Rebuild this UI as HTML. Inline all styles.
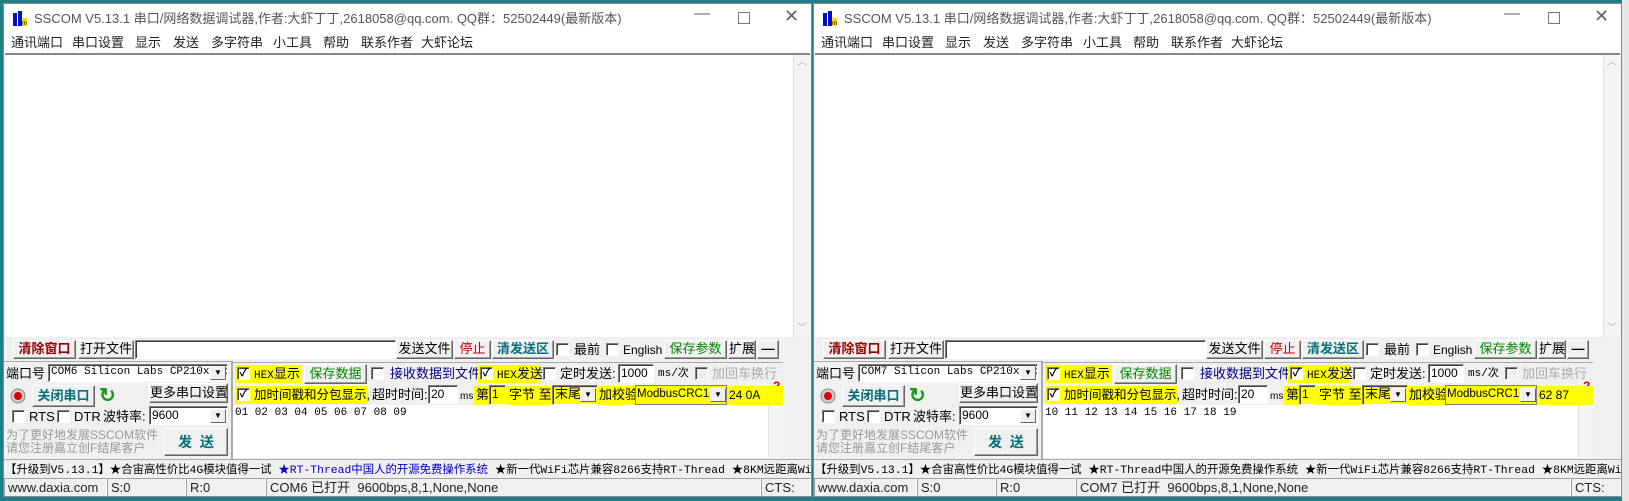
<!DOCTYPE html>
<html><head><meta charset="utf-8"><style>
*{box-sizing:border-box;margin:0;padding:0}
body{width:1629px;height:501px;overflow:hidden;background:#1f7d86;position:relative;font-family:"Liberation Sans","Noto Sans CJK SC",sans-serif;font-size:13px;color:#000}
.win{position:absolute;top:3px;width:809px;height:494px;background:#f0f0f0;border:1px solid #888;overflow:hidden}
.a{position:absolute;white-space:nowrap;line-height:16px}
.title{left:0;top:0;width:100%;height:29px;background:#fff}
.ttl{left:30px;top:7px;font-size:13px;color:#555}
.menu{left:0;top:29px;width:100%;height:20px;background:#fff}
.menu span{position:absolute;top:2px;font-size:13px;color:#222;line-height:16px}
.rx{left:1px;top:49px;width:805px;height:284px;background:#fff;border-top:2px solid #888}
.sb{background:#f4f4f4;border-left:1px solid #e0e0e0}
.btn{background:#f0f0f0;border:1px solid;border-color:#fff #666 #666 #fff;box-shadow:inset -1px -1px #a0a0a0;text-align:center;line-height:16px;font-size:13px}
.inp{background:#fff;border:1px solid;border-color:#808080 #fff #fff #808080;box-shadow:inset 1px 1px #404040;font-size:12px;line-height:16px;padding-left:2px;overflow:hidden}
.cb{width:13px;height:13px;background:#fff;border:1px solid;border-color:#808080 #fff #fff #808080;box-shadow:inset 1px 1px #404040;font-size:11px;line-height:11px;text-align:center;font-weight:bold}
.y{background:#ffff00}
.mono{font-family:"Liberation Mono","Noto Sans CJK SC",monospace;font-size:12px}
.dd{width:16px;height:14px;background:#f0f0f0;border:1px solid;border-color:#fff #666 #666 #fff;font-size:8px;line-height:12px;text-align:center}
.st{top:474px;height:20px;border:1px solid;border-color:#a0a0a0 #fff #fff #a0a0a0;padding-left:3px;line-height:17px;font-size:13px;color:#222}
.ctl{top:4px;font-size:16px;color:#666}
</style></head><body>
<div style="position:absolute;left:1622px;top:0;width:7px;height:501px;background:#e6e6e6"></div>

<div class="win" style="left:3px">
<div class="a title"></div>
<svg class="a" style="left:8px;top:6px" width="16" height="17"><rect x="1" y="3" width="4" height="13" fill="#0010c0"/><rect x="6" y="1" width="4" height="15" fill="#0010c0"/><rect x="10" y="8" width="5" height="8" fill="#ffe000"/><text x="10" y="15" font-size="6" fill="#000">m</text></svg>
<div class="a ttl">SSCOM V5.13.1 串口/网络数据调试器,作者:大虾丁丁,2618058@qq.com. QQ群：52502449(最新版本)</div>
<div class="a ctl" style="left:690px;top:2px">—</div><div class="a" style="left:734px;top:8px;width:12px;height:12px;border:1px solid #777"></div><div class="a ctl" style="left:780px;top:4px;font-size:18px">✕</div>
<div class="a menu"><span style="left:7px">通讯端口</span><span style="left:68px">串口设置</span><span style="left:131px">显示</span><span style="left:169px">发送</span><span style="left:207px">多字符串</span><span style="left:269px">小工具</span><span style="left:319px">帮助</span><span style="left:357px">联系作者</span><span style="left:417px">大虾论坛</span></div>
<div class="a rx"></div><div class="a sb" style="left:789px;top:51px;width:17px;height:282px"><div style="text-align:center;color:#aaa;font-size:10px">︿</div><div style="position:absolute;bottom:0;width:100%;text-align:center;color:#aaa;font-size:10px">﹀</div></div>
<div class="a btn" style="left:9px;top:336px;width:63px;height:19px;color:#900;font-weight:bold">清除窗口</div>
<div class="a btn" style="left:74px;top:336px;width:56px;height:19px">打开文件</div>
<div class="a inp" style="left:131px;top:336px;width:261px;height:19px"></div>
<div class="a btn" style="left:392px;top:336px;width:57px;height:19px">发送文件</div>
<div class="a btn" style="left:450px;top:336px;width:37px;height:19px;color:#c00">停止</div>
<div class="a btn" style="left:488px;top:336px;width:62px;height:19px;color:#07707a;font-weight:bold">清发送区</div>
<div class="a cb" style="left:552px;top:339px"></div><div class="a" style="left:570px;top:338px">最前</div>
<div class="a cb" style="left:602px;top:339px"></div><div class="a" style="left:619px;top:338px;font-size:12px">English</div>
<div class="a btn" style="left:660px;top:336px;width:63px;height:19px;color:#080">保存参数</div>
<div class="a btn" style="left:724px;top:336px;width:28px;height:19px">扩展</div>
<div class="a btn" style="left:753px;top:336px;width:22px;height:19px;font-weight:bold">—</div>
<div class="a" style="left:0;top:357px;width:227px;height:1px;background:#aaa"></div>
<div class="a" style="left:2px;top:362px">端口号</div>
<div class="a inp mono" style="left:44px;top:360px;width:180px;height:18px;font-size:11px;line-height:15px">COM6 Silicon Labs CP210x U:</div><div class="a dd" style="left:206px;top:362px">▼</div>
<svg class="a" style="left:6px;top:384px" width="16" height="16"><circle cx="8" cy="8" r="7" fill="#ccc" stroke="#888"/><circle cx="8" cy="8" r="4" fill="#d00"/></svg>
<div class="a btn" style="left:28px;top:381px;width:63px;height:22px;color:#07707a;font-weight:bold;line-height:20px">关闭串口</div>
<div class="a" style="left:95px;top:382px;color:#1a9a1a;font-size:20px;font-weight:bold;line-height:20px">↻</div>
<div class="a btn" style="left:145px;top:379px;width:79px;height:20px;line-height:18px">更多串口设置</div>
<div class="a cb" style="left:8px;top:406px"></div><div class="a" style="left:25px;top:405px">RTS</div>
<div class="a cb" style="left:53px;top:406px"></div><div class="a" style="left:70px;top:405px">DTR</div>
<div class="a" style="left:99px;top:405px">波特率:</div>
<div class="a inp" style="left:145px;top:402px;width:79px;height:19px">9600</div><div class="a dd" style="left:206px;top:405px">▼</div>
<div class="a" style="left:2px;top:425px;color:#999;font-size:12px;line-height:13px">为了更好地发展SSCOM软件<br>请您注册嘉立创F结尾客户</div>
<div class="a btn" style="left:160px;top:424px;width:64px;height:28px;line-height:26px;color:#07707a;font-weight:bold;font-size:14px">发&nbsp;&nbsp;送</div>
<div class="a" style="left:227px;top:357px;width:2px;height:98px;background:#aaa"></div>
<div class="a" style="left:229px;top:358px;width:550px;height:1px;background:#aaa"></div>
<div class="a y" style="left:231px;top:361px;width:67px;height:18px"></div><div class="a cb" style="left:233px;top:363px">✓</div><div class="a" style="left:250px;top:362px"><span class="mono" style="font-size:11px">HEX</span>显示</div>
<div class="a btn" style="left:300px;top:360px;width:63px;height:20px;color:#080;line-height:18px">保存数据</div>
<div class="a cb" style="left:367px;top:363px"></div><div class="a" style="left:386px;top:362px;color:#000080">接收数据到文件</div>
<div class="a y" style="left:231px;top:382px;width:133px;height:18px"></div><div class="a cb" style="left:233px;top:384px">✓</div><div class="a" style="left:250px;top:383px;font-size:12.5px">加时间戳和分包显示,</div>
<div class="a" style="left:368px;top:383px">超时时间:</div>
<div class="a inp" style="left:424px;top:381px;width:30px;height:19px">20</div><div class="a" style="left:456px;top:385px;font-size:10px">ms</div>
<div class="a" style="left:229px;top:401px;width:536px;height:53px;background:#fff"></div>
<div class="a mono" style="left:231px;top:401px;font-size:11px">01 02 03 04 05 06 07 08 09</div>
<div class="a sb" style="left:764px;top:401px;width:15px;height:53px"></div>
<div class="a y" style="left:474px;top:361px;width:62px;height:18px"></div><div class="a cb" style="left:476px;top:363px">✓</div><div class="a" style="left:493px;top:362px"><span class="mono" style="font-size:11px">HEX</span>发送</div>
<div class="a cb" style="left:539px;top:363px"></div><div class="a" style="left:556px;top:362px">定时发送:</div>
<div class="a inp" style="left:614px;top:360px;width:36px;height:19px">1000</div><div class="a mono" style="left:654px;top:362px;font-size:11px">ms/次</div>
<div class="a cb" style="left:691px;top:363px;background:#eee"></div><div class="a" style="left:708px;top:362px;color:#aaa">加回车换行</div>
<div class="a" style="left:769px;top:374px;color:#d00;font-weight:bold;font-size:12px">?</div>
<div class="a y" style="left:470px;top:382px;width:309px;height:19px"></div>
<div class="a" style="left:472px;top:383px">第</div><div class="a inp" style="left:485px;top:381px;width:17px;height:20px;background:#ff0">1</div>
<div class="a" style="left:505px;top:383px">字节&nbsp;至</div>
<div class="a inp" style="left:548px;top:381px;width:46px;height:20px;background:#ff0;font-size:13px">末尾</div><div class="a dd" style="left:576px;top:384px">▼</div>
<div class="a" style="left:595px;top:383px">加校验</div>
<div class="a inp" style="left:631px;top:381px;width:92px;height:20px;background:#ff0;box-shadow:none;border-color:#808080;font-size:11.5px;padding-left:1px">ModbusCRC16</div><div class="a dd" style="left:706px;top:384px">▼</div>
<div class="a" style="left:725px;top:383px;font-size:12px">24 0A</div>
<div class="a" style="left:0;top:455px;width:100%;height:1px;background:#aaa"></div>
<div class="a mono" style="left:1px;top:459px;font-size:11.4px;line-height:16px">【升级到V5.13.1】★合宙高性价比4G模块值得一试 <span style="color:#00c">★RT-Thread中国人的开源免费操作系统</span> ★新一代WiFi芯片兼容8266支持RT-Thread ★8KM远距离WiF</div>
<div class="a st" style="left:0;width:103px">www.daxia.com</div>
<div class="a st" style="left:103px;width:79px">S:0</div>
<div class="a st" style="left:182px;width:80px">R:0</div>
<div class="a st" style="left:262px;width:495px">COM6 已打开&nbsp;&nbsp;9600bps,8,1,None,None</div>
<div class="a st" style="left:757px;width:50px">CTS:</div>
</div>

<div class="win" style="left:813px">
<div class="a title"></div>
<svg class="a" style="left:8px;top:6px" width="16" height="17"><rect x="1" y="3" width="4" height="13" fill="#0010c0"/><rect x="6" y="1" width="4" height="15" fill="#0010c0"/><rect x="10" y="8" width="5" height="8" fill="#ffe000"/><text x="10" y="15" font-size="6" fill="#000">m</text></svg>
<div class="a ttl">SSCOM V5.13.1 串口/网络数据调试器,作者:大虾丁丁,2618058@qq.com. QQ群：52502449(最新版本)</div>
<div class="a ctl" style="left:690px;top:2px">—</div><div class="a" style="left:734px;top:8px;width:12px;height:12px;border:1px solid #777"></div><div class="a ctl" style="left:780px;top:4px;font-size:18px">✕</div>
<div class="a menu"><span style="left:7px">通讯端口</span><span style="left:68px">串口设置</span><span style="left:131px">显示</span><span style="left:169px">发送</span><span style="left:207px">多字符串</span><span style="left:269px">小工具</span><span style="left:319px">帮助</span><span style="left:357px">联系作者</span><span style="left:417px">大虾论坛</span></div>
<div class="a rx"></div><div class="a sb" style="left:789px;top:51px;width:17px;height:282px"><div style="text-align:center;color:#aaa;font-size:10px">︿</div><div style="position:absolute;bottom:0;width:100%;text-align:center;color:#aaa;font-size:10px">﹀</div></div>
<div class="a btn" style="left:9px;top:336px;width:63px;height:19px;color:#900;font-weight:bold">清除窗口</div>
<div class="a btn" style="left:74px;top:336px;width:56px;height:19px">打开文件</div>
<div class="a inp" style="left:131px;top:336px;width:261px;height:19px"></div>
<div class="a btn" style="left:392px;top:336px;width:57px;height:19px">发送文件</div>
<div class="a btn" style="left:450px;top:336px;width:37px;height:19px;color:#c00">停止</div>
<div class="a btn" style="left:488px;top:336px;width:62px;height:19px;color:#07707a;font-weight:bold">清发送区</div>
<div class="a cb" style="left:552px;top:339px"></div><div class="a" style="left:570px;top:338px">最前</div>
<div class="a cb" style="left:602px;top:339px"></div><div class="a" style="left:619px;top:338px;font-size:12px">English</div>
<div class="a btn" style="left:660px;top:336px;width:63px;height:19px;color:#080">保存参数</div>
<div class="a btn" style="left:724px;top:336px;width:28px;height:19px">扩展</div>
<div class="a btn" style="left:753px;top:336px;width:22px;height:19px;font-weight:bold">—</div>
<div class="a" style="left:0;top:357px;width:227px;height:1px;background:#aaa"></div>
<div class="a" style="left:2px;top:362px">端口号</div>
<div class="a inp mono" style="left:44px;top:360px;width:180px;height:18px;font-size:11px;line-height:15px">COM7 Silicon Labs CP210x U:</div><div class="a dd" style="left:206px;top:362px">▼</div>
<svg class="a" style="left:6px;top:384px" width="16" height="16"><circle cx="8" cy="8" r="7" fill="#ccc" stroke="#888"/><circle cx="8" cy="8" r="4" fill="#d00"/></svg>
<div class="a btn" style="left:28px;top:381px;width:63px;height:22px;color:#07707a;font-weight:bold;line-height:20px">关闭串口</div>
<div class="a" style="left:95px;top:382px;color:#1a9a1a;font-size:20px;font-weight:bold;line-height:20px">↻</div>
<div class="a btn" style="left:145px;top:379px;width:79px;height:20px;line-height:18px">更多串口设置</div>
<div class="a cb" style="left:8px;top:406px"></div><div class="a" style="left:25px;top:405px">RTS</div>
<div class="a cb" style="left:53px;top:406px"></div><div class="a" style="left:70px;top:405px">DTR</div>
<div class="a" style="left:99px;top:405px">波特率:</div>
<div class="a inp" style="left:145px;top:402px;width:79px;height:19px">9600</div><div class="a dd" style="left:206px;top:405px">▼</div>
<div class="a" style="left:2px;top:425px;color:#999;font-size:12px;line-height:13px">为了更好地发展SSCOM软件<br>请您注册嘉立创F结尾客户</div>
<div class="a btn" style="left:160px;top:424px;width:64px;height:28px;line-height:26px;color:#07707a;font-weight:bold;font-size:14px">发&nbsp;&nbsp;送</div>
<div class="a" style="left:227px;top:357px;width:2px;height:98px;background:#aaa"></div>
<div class="a" style="left:229px;top:358px;width:550px;height:1px;background:#aaa"></div>
<div class="a y" style="left:231px;top:361px;width:67px;height:18px"></div><div class="a cb" style="left:233px;top:363px">✓</div><div class="a" style="left:250px;top:362px"><span class="mono" style="font-size:11px">HEX</span>显示</div>
<div class="a btn" style="left:300px;top:360px;width:63px;height:20px;color:#080;line-height:18px">保存数据</div>
<div class="a cb" style="left:367px;top:363px"></div><div class="a" style="left:386px;top:362px;color:#000080">接收数据到文件</div>
<div class="a y" style="left:231px;top:382px;width:133px;height:18px"></div><div class="a cb" style="left:233px;top:384px">✓</div><div class="a" style="left:250px;top:383px;font-size:12.5px">加时间戳和分包显示,</div>
<div class="a" style="left:368px;top:383px">超时时间:</div>
<div class="a inp" style="left:424px;top:381px;width:30px;height:19px">20</div><div class="a" style="left:456px;top:385px;font-size:10px">ms</div>
<div class="a" style="left:229px;top:401px;width:536px;height:53px;background:#fff"></div>
<div class="a mono" style="left:231px;top:401px;font-size:11px">10 11 12 13 14 15 16 17 18 19</div>
<div class="a sb" style="left:764px;top:401px;width:15px;height:53px"></div>
<div class="a y" style="left:474px;top:361px;width:62px;height:18px"></div><div class="a cb" style="left:476px;top:363px">✓</div><div class="a" style="left:493px;top:362px"><span class="mono" style="font-size:11px">HEX</span>发送</div>
<div class="a cb" style="left:539px;top:363px"></div><div class="a" style="left:556px;top:362px">定时发送:</div>
<div class="a inp" style="left:614px;top:360px;width:36px;height:19px">1000</div><div class="a mono" style="left:654px;top:362px;font-size:11px">ms/次</div>
<div class="a cb" style="left:691px;top:363px;background:#eee"></div><div class="a" style="left:708px;top:362px;color:#aaa">加回车换行</div>
<div class="a" style="left:769px;top:374px;color:#d00;font-weight:bold;font-size:12px">?</div>
<div class="a y" style="left:470px;top:382px;width:309px;height:19px"></div>
<div class="a" style="left:472px;top:383px">第</div><div class="a inp" style="left:485px;top:381px;width:17px;height:20px;background:#ff0">1</div>
<div class="a" style="left:505px;top:383px">字节&nbsp;至</div>
<div class="a inp" style="left:548px;top:381px;width:46px;height:20px;background:#ff0;font-size:13px">末尾</div><div class="a dd" style="left:576px;top:384px">▼</div>
<div class="a" style="left:595px;top:383px">加校验</div>
<div class="a inp" style="left:631px;top:381px;width:92px;height:20px;background:#ff0;box-shadow:none;border-color:#808080;font-size:11.5px;padding-left:1px">ModbusCRC16</div><div class="a dd" style="left:706px;top:384px">▼</div>
<div class="a" style="left:725px;top:383px;font-size:12px">62 87</div>
<div class="a" style="left:0;top:455px;width:100%;height:1px;background:#aaa"></div>
<div class="a mono" style="left:1px;top:459px;font-size:11.4px;line-height:16px">【升级到V5.13.1】★合宙高性价比4G模块值得一试 ★RT-Thread中国人的开源免费操作系统 ★新一代WiFi芯片兼容8266支持RT-Thread ★8KM远距离WiF</div>
<div class="a st" style="left:0;width:103px">www.daxia.com</div>
<div class="a st" style="left:103px;width:79px">S:0</div>
<div class="a st" style="left:182px;width:80px">R:0</div>
<div class="a st" style="left:262px;width:495px">COM7 已打开&nbsp;&nbsp;9600bps,8,1,None,None</div>
<div class="a st" style="left:757px;width:50px">CTS:</div>
</div>
</body></html>
